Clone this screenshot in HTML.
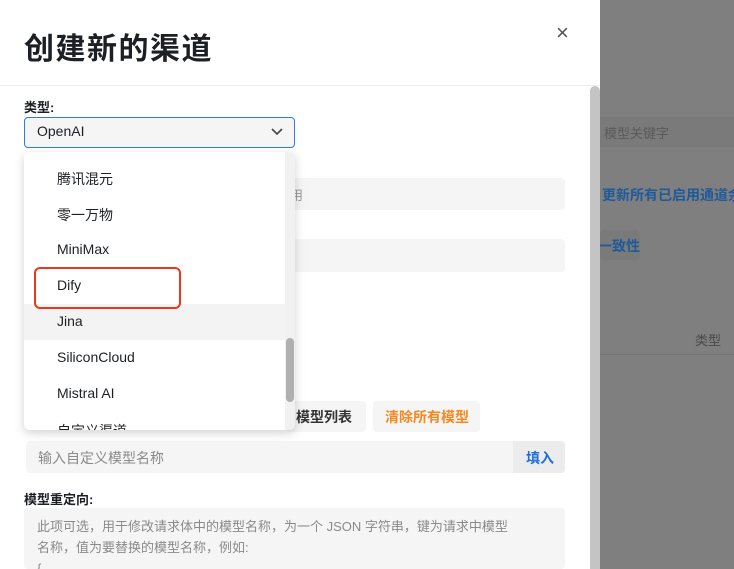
<!DOCTYPE html>
<html><head><meta charset="utf-8"><style>
*{margin:0;padding:0;box-sizing:border-box}
html,body{width:734px;height:569px;overflow:hidden}
body{position:relative;background:#7f7f7f;font-family:"Liberation Sans","Noto Sans CJK SC",sans-serif;color:#1c1f23}
.a{position:absolute}
.panel{left:0;top:0;width:600px;height:569px;background:#fff}
.in{background:#f5f5f6;border-radius:4px}
.item{position:absolute;left:33px;font-size:14px;color:#1c1f23}
</style></head><body>
<div class="a" style="left:600px;top:117px;width:134px;height:30px;background:#7a7a7a"></div>
<div class="a" style="left:604px;top:123px;font-size:13px;color:#5a5a5a">模型关键字</div>
<div class="a" style="left:602px;top:185px;font-size:14px;color:#1f5a9a;white-space:nowrap;font-weight:bold">更新所有已启用通道余</div>
<div class="a" style="left:600px;top:230px;width:40px;height:30px;background:#7a7a7a;border-radius:4px"></div>
<div class="a" style="left:598px;top:236px;font-size:14px;color:#1f5a9a;font-weight:bold">一致性</div>
<div class="a" style="left:695px;top:330px;font-size:13px;color:#4a4a4a">类型</div>
<div class="a" style="left:600px;top:354px;width:134px;height:1px;background:#757575"></div>

<div class="a panel"></div>
<div class="a" style="left:24px;top:24px;font-size:30px;font-weight:bold;letter-spacing:1.5px">创建新的渠道</div>
<div class="a" style="left:556px;top:20px;font-size:22px;color:#555">×</div>
<div class="a" style="left:0;top:85px;width:600px;height:1px;background:#eee"></div>
<div class="a" style="left:590px;top:86px;width:10px;height:483px;background:#c4c4c4;border-radius:5px 5px 0 0"></div>

<div class="a" style="left:24px;top:97px;font-size:13px;font-weight:bold">类型:</div>
<div class="a" style="left:24px;top:117px;width:271px;height:31px;border:1px solid #2a7de1;border-radius:4px;background:#f5f5f6"></div>
<div class="a" style="left:37px;top:123px;font-size:14px">OpenAI</div>
<svg class="a" style="left:270px;top:126px" width="14" height="12"><path d="M2 3l5 5 5-5" stroke="#444" stroke-width="1.6" fill="none"/></svg>

<div class="a in" style="left:290px;top:178px;width:275px;height:32px"></div>
<div class="a" style="left:290px;top:185px;font-size:13px;color:#999">用</div>
<div class="a in" style="left:290px;top:239px;width:275px;height:33px"></div>
<div class="a in" style="left:286px;top:401px;width:80px;height:31px"></div>
<div class="a" style="left:296px;top:407px;font-size:14px;font-weight:bold;color:#333">模型列表</div>
<div class="a in" style="left:373px;top:401px;width:107px;height:31px"></div>
<div class="a" style="left:385px;top:407px;font-size:14px;font-weight:bold;color:#f7871f">清除所有模型</div>
<div class="a in" style="left:26px;top:441px;width:539px;height:32px"></div>
<div class="a" style="left:513px;top:441px;width:52px;height:32px;background:#ececed;border-radius:0 4px 4px 0"></div>
<div class="a" style="left:38px;top:448px;font-size:14px;color:#8a8a8a">输入自定义模型名称</div>
<div class="a" style="left:526px;top:448px;font-size:14px;font-weight:bold;color:#1e6fd9">填入</div>
<div class="a" style="left:24px;top:489px;font-size:13px;font-weight:bold">模型重定向:</div>
<div class="a in" style="left:24px;top:508px;width:541px;height:61px"></div>
<div class="a" style="left:37px;top:516px;width:480px;font-size:13px;line-height:21px;color:#8a8a8a">此项可选，用于修改请求体中的模型名称，为一个 JSON 字符串，键为请求中模型名称，值为要替换的模型名称，例如:<br>{</div>

<div class="a" style="left:24px;top:152px;width:271px;height:278px;background:#fff;border-radius:6px;box-shadow:0 3px 10px rgba(0,0,0,.18);overflow:hidden">
 <div class="a" style="left:0;top:152px;width:261px;height:36px;background:#f3f3f3"></div>
 <div class="item" style="top:17px">腾讯混元</div>
 <div class="item" style="top:53px">零一万物</div>
 <div class="item" style="top:89px">MiniMax</div>
 <div class="item" style="top:125px">Dify</div>
 <div class="item" style="top:161px">Jina</div>
 <div class="item" style="top:197px">SiliconCloud</div>
 <div class="item" style="top:233px">Mistral AI</div>
 <div class="item" style="top:269px">自定义渠道</div>
 <div class="a" style="left:261px;top:0;width:10px;height:278px;background:#f1f1f1"></div>
 <div class="a" style="left:262px;top:186px;width:8px;height:64px;background:#b0b0b0;border-radius:4px"></div>
</div>
<div class="a" style="left:34px;top:267px;width:147px;height:42px;border:2px solid #e8391f;border-radius:6px"></div>
</body></html>
